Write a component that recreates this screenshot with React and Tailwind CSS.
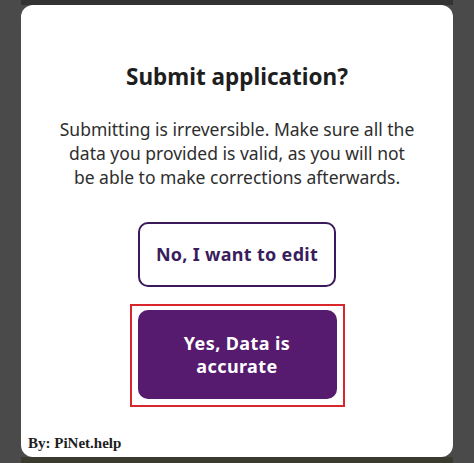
export default function App() {
  return (
    <div className="w-[474px] h-[463px] bg-[#4a4a4a] flex flex-col items-center overflow-hidden">
      {/* top strip */}
      <div className="h-[5px] w-[432px] bg-[#333333] shrink-0" />

      {/* DIALOG CARD */}
      <div
        className="w-[432px] h-[452px] shrink-0 bg-white rounded-[12px] flex flex-col items-center"
        style={{ fontFamily: "'Noto Sans', sans-serif" }}
      >
        <h2 className="mt-[58px] text-[22.5px] leading-[28px] font-bold text-[#1e1e1e]">
          Submit application?
        </h2>

        <p className="mt-[26px] text-[17.5px] leading-[24px] text-[#2e2e2e] text-center whitespace-nowrap">
          Submitting is irreversible. Make sure all the
          <br />
          data you provided is valid, as you will not
          <br />
          be able to make corrections afterwards.
        </p>

        <button className="mt-[33px] w-[198px] h-[65px] border-2 border-[#3b1a5c] rounded-[10px] text-[18px] tracking-[0.3px] font-bold text-[#3a1d5c]">
          No, I want to edit
        </button>

        {/* highlight box */}
        <div className="mt-[17px] w-[215px] h-[103px] border-2 border-[#d9262c] pl-[6px] pt-[4px]">
          <button className="w-[199px] h-[89px] rounded-[10px] bg-[#561b6f] text-white text-[18px] tracking-[0.4px] leading-[23px] font-bold">
            Yes, Data is
            <br />
            accurate
          </button>
        </div>

        <div
          className="self-start ml-[7px] mt-[27px] text-[15px] leading-[18px] font-bold text-[#1e1e1e]"
          style={{ fontFamily: "'Liberation Serif', serif" }}
        >
          By: PiNet.help
        </div>
      </div>

      {/* strip below card */}
      <div className="h-[6px] w-[432px] bg-[#3a3a2e] shrink-0" />
    </div>
  );
}
